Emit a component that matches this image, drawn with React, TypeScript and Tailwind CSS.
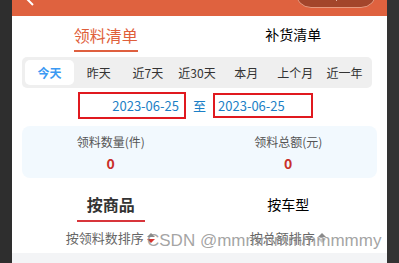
const ranges = ['今天', '昨天', '近7天', '近30天', '本月', '上个月', '近一年'];

const font = { fontFamily: '"Noto Sans CJK SC", "Liberation Sans", sans-serif' };

function SortIcon({ active }: { active: boolean }) {
  return (
    <svg width="10" height="12" viewBox="0 0 10 12" className="ml-[2px]">
      <path d="M5 1 L9 5 L1 5 Z" fill="#8a8a8a" />
      <path d="M1 7 L9 7 L5 11 Z" fill={active ? '#d7332f' : '#c8c8c8'} />
    </svg>
  );
}

export default function App() {
  return (
    <div className="relative flex h-[263px] w-[399px] overflow-hidden bg-[#2f2f2f]" style={font}>
      <div className="w-[12px] shrink-0 bg-[#2e2e2e]" />

      <div className="flex w-[375px] shrink-0 flex-col bg-white">
        {/* nav bar, mostly scrolled off */}
        <div className="relative h-[16px] shrink-0 overflow-hidden bg-[#df623f]">
          <svg width="40" height="16" viewBox="0 0 40 16" className="absolute left-0 top-0">
            <polyline points="26,-14 13,-3 21,5" fill="none" stroke="white" strokeWidth="2" />
          </svg>
          <div className="absolute left-0 right-0 top-[-27px] text-center text-[17px] font-semibold leading-[26px] text-white">
            领料统计
          </div>
          <div className="absolute left-[283px] top-[-24px] flex h-[32px] w-[82px] items-center rounded-full border border-[#e79a80] bg-[#a3452b]">
            <div className="flex-1" />
            <div className="h-[18px] w-px bg-[#e6b3a3]" />
            <div className="flex flex-1 justify-center">
              <div className="mt-[-2px] h-[14px] w-[14px] rounded-full border-2 border-white" />
            </div>
          </div>
        </div>

        {/* list tabs */}
        <div className="flex h-[41px] shrink-0">
          <div className="flex flex-1 flex-col items-center pt-[8px]">
            <span className="text-[16px] leading-[22px] text-[#df5f3b]">领料清单</span>
            <div className="mt-[4px] h-[2px] w-[64px] bg-[#df6040]" />
          </div>
          <div className="flex flex-1 justify-center pt-[8px]">
            <span className="text-[14px] leading-[20px] text-black">补货清单</span>
          </div>
        </div>

        {/* quick ranges */}
        <div className="ml-[10px] grid h-[31px] w-[350px] shrink-0 grid-cols-7 rounded-[5px] bg-[#efefef] p-[3px]">
          {ranges.map((r, i) => (
            <div
              key={r}
              className={
                i === 0
                  ? 'flex items-center justify-center rounded-[5px] bg-white text-[12px] font-semibold text-[#3b99f3]'
                  : 'flex items-center justify-center text-[12px] text-[#333]'
              }
            >
              {r}
            </div>
          ))}
        </div>

        {/* date range */}
        <div className="mt-[4px] flex h-[27px] shrink-0 items-center pl-[66px]">
          <div className="flex h-[27px] w-[108px] items-center justify-end border-2 border-[#e0191f] pr-[5px] text-[13px] text-[#1b7fc6]">
            2023-06-25
          </div>
          <span className="mx-[7px] text-[13px] text-[#1b7fc6]">至</span>
          <div className="flex h-[25px] w-[100px] items-center border-2 border-[#e0191f] pl-[3px] text-[13px] text-[#1b7fc6]">
            2023-06-25
          </div>
        </div>

        {/* totals */}
        <div className="mx-[10px] mt-[7px] flex h-[52px] shrink-0 rounded-[8px] bg-[#f2f9fe]">
          {[
            ['领料数量(件)', '0'],
            ['领料总额(元)', '0'],
          ].map(([label, value]) => (
            <div key={label} className="flex flex-1 flex-col items-center pt-[7px]">
              <span className="text-[12px] leading-[18px] text-[#555]">{label}</span>
              <span className="mt-[2px] text-[14px] font-bold leading-[20px] text-[#c9302a]">{value}</span>
            </div>
          ))}
        </div>

        {/* group tabs */}
        <div className="mx-[10px] mt-[14px] flex h-[30px] shrink-0">
          <div className="flex flex-1 flex-col items-center">
            <span className="text-[16px] font-semibold leading-[24px] text-[#333]">按商品</span>
            <div className="mt-[4px] h-[2px] w-[68px] bg-[#d8353b]" />
          </div>
          <div className="flex flex-1 justify-center">
            <span className="pt-[2px] text-[14px] leading-[20px] text-black">按车型</span>
          </div>
        </div>

        {/* sorting */}
        <div className="mx-[10px] mt-[6px] flex h-[20px] shrink-0">
          <div className="flex flex-1 items-center justify-center text-[13px] text-[#666]">
            按领料数排序
            <SortIcon active />
          </div>
          <div className="flex flex-1 items-center justify-center text-[13px] text-[#666]">
            按总额排序
            <SortIcon active={false} />
          </div>
        </div>

        <div className="mt-[5px] flex-1 bg-[#f3f4f6]" />
      </div>

      <div className="flex-1 bg-[#333]" />

      {/* screenshot watermark */}
      <div
        className="pointer-events-none absolute left-[147px] top-[229px] text-[17px] leading-[24px] text-[#8c8c8c]/80"
        style={{ fontFamily: '"Liberation Sans", sans-serif' }}
      >
        CSDN @mmmmmmmmmmmy
      </div>
    </div>
  );
}
